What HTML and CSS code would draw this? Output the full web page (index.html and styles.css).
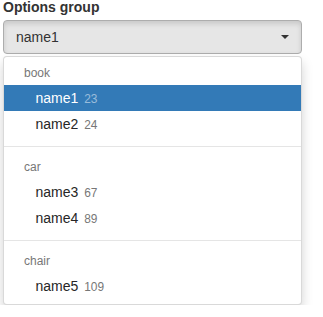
FILE: index.html
```html
<!DOCTYPE html>
<html lang="en">
<head>
    <meta charset="UTF-8">
    <meta name="viewport" content="width=device-width, initial-scale=1.0">
    <title>Options group</title>
    <link rel="stylesheet" href="styles.css">
</head>
<body>

<div class="form-group">
    <label class="control-label">Options group</label>

    <div class="select open">
        <button class="select-toggle" type="button">
            <span class="filter-option">name1</span>
            <span class="caret"></span>
        </button>

        <ul class="dropdown-menu">
            <li class="dropdown-header">book</li>
            <li class="active"><a class="opt">name1<small>23</small></a></li>
            <li><a class="opt">name2<small>24</small></a></li>
            <li class="divider"></li>
            <li class="dropdown-header">car</li>
            <li><a class="opt">name3<small>67</small></a></li>
            <li><a class="opt">name4<small>89</small></a></li>
            <li class="divider"></li>
            <li class="dropdown-header">chair</li>
            <li><a class="opt">name5<small>109</small></a></li>
        </ul>
    </div>
</div>

</body>
</html>
```

FILE: styles.css
```css
/* Basic Reset */
* {
    margin: 0;
    padding: 0;
    box-sizing: border-box;
}

body {
    font-family: "Liberation Sans", Arial, sans-serif;
    font-size: 14px;
    line-height: 1.42857;
    color: #333;
    background-color: #fff;
    padding: 0 21px 0 3px;
}

.form-group {
    margin-top: -2px;
}

.control-label {
    display: block;
    font-weight: bold;
    margin-bottom: 2px;
}

/* Select button */
.select {
    position: relative;
}

.select-toggle {
    display: flex;
    align-items: center;
    width: 100%;
    height: 34px;
    padding: 6px 12px;
    font-family: inherit;
    font-size: 14px;
    line-height: 20px;
    color: #333;
    text-align: left;
    background-color: #e6e6e6;
    border: 1px solid #adadad;
    border-radius: 4px;
    box-shadow: inset 0 3px 5px rgba(0, 0, 0, .125);
}

.filter-option {
    flex: 1;
}

.caret {
    width: 0;
    height: 0;
    border-top: 4px solid #333;
    border-left: 4px solid transparent;
    border-right: 4px solid transparent;
}

/* Dropdown menu */
.dropdown-menu {
    list-style: none;
    margin-top: 2px;
    padding: 5px 0;
    background-color: #fff;
    border: 1px solid rgba(0, 0, 0, .15);
    border-radius: 4px;
    box-shadow: 0 6px 12px rgba(0, 0, 0, .175);
}

.dropdown-header {
    height: 23px;
    padding: 3px 20px;
    font-size: 12px;
    line-height: 17px;
    color: #777;
}

.dropdown-menu a {
    display: block;
    height: 26px;
    padding: 3px 20px;
    line-height: 20px;
    color: #262626;
}

.dropdown-menu a.opt {
    padding-left: 2.25em;
}

.dropdown-menu small {
    padding-left: .5em;
    font-size: 85%;
    line-height: 1;
    color: #777;
}

.dropdown-menu .active a {
    color: #fff;
    background-color: #337ab7;
}

.dropdown-menu .active small {
    color: rgba(255, 255, 255, .5);
}

.divider {
    height: 1px;
    margin: 9px 0;
    background-color: #e5e5e5;
}
```
